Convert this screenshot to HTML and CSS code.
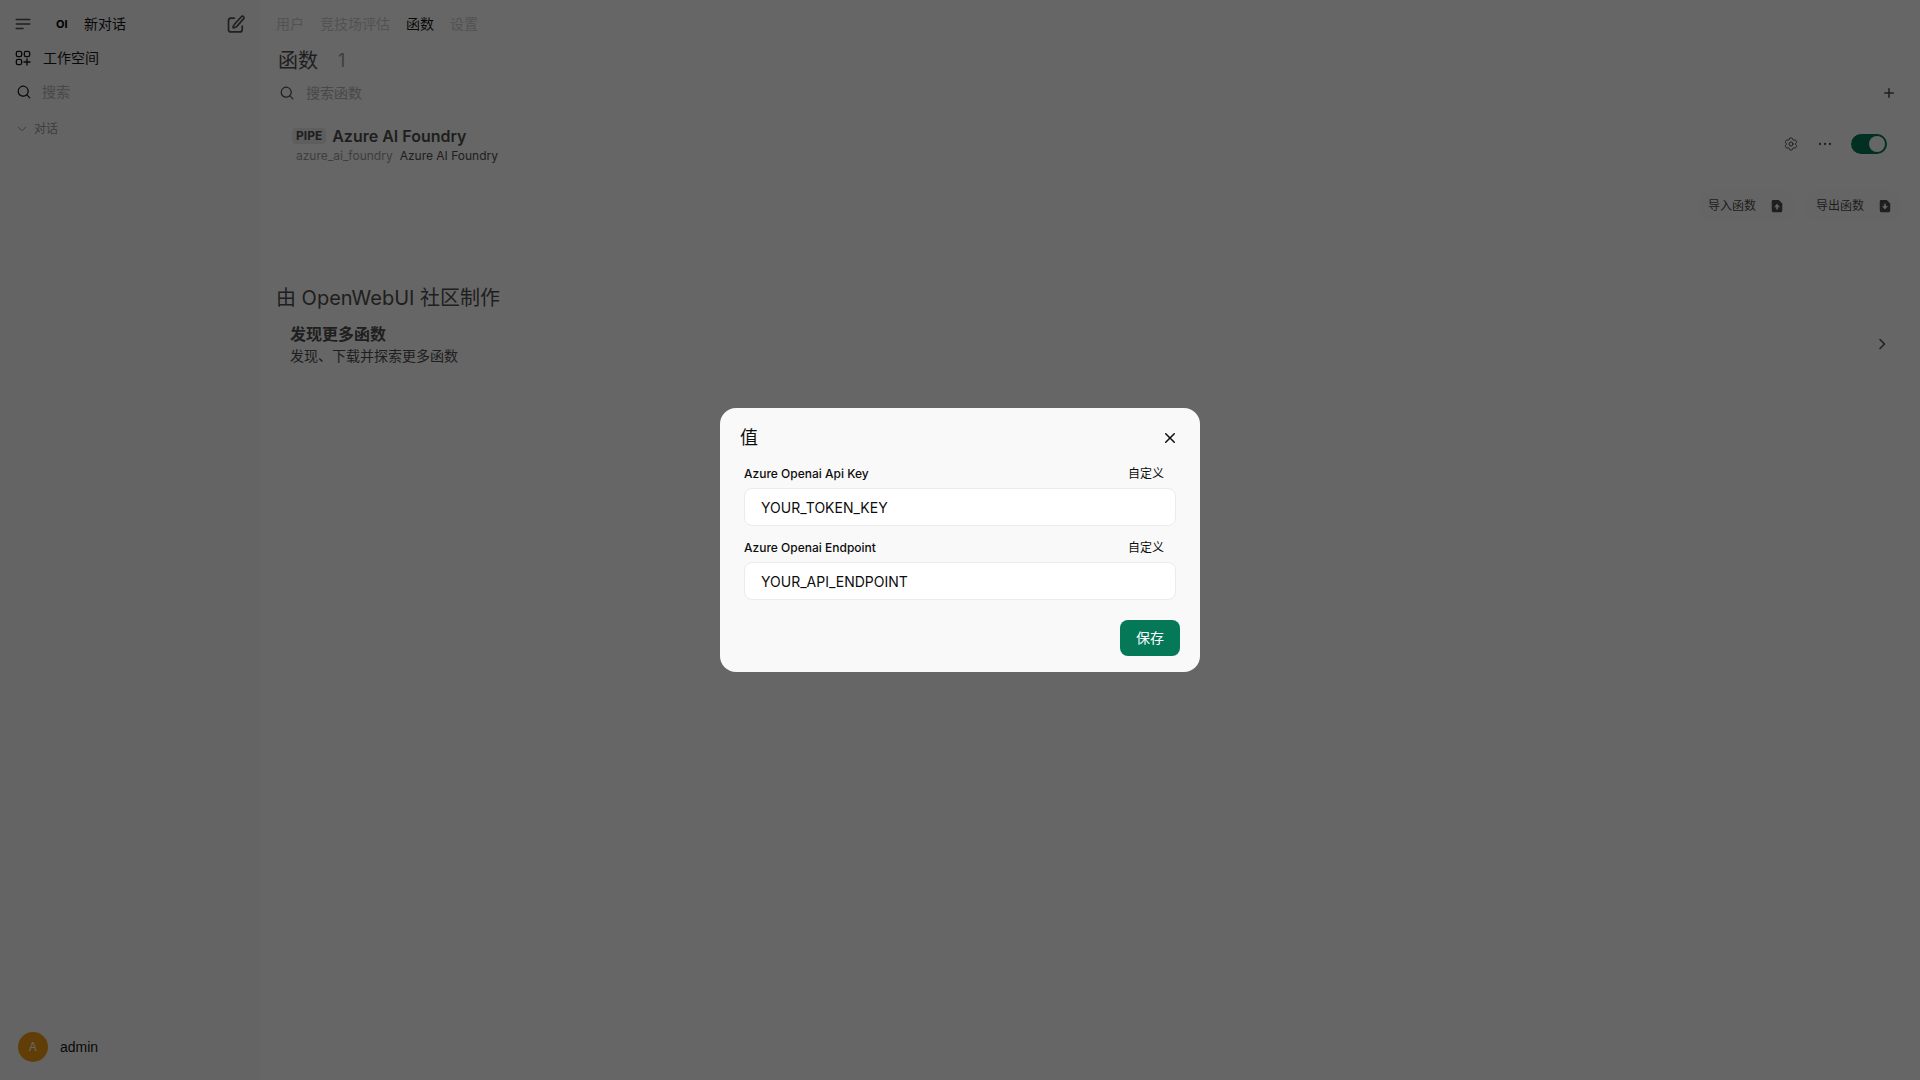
FILE: index.html
```html
<!DOCTYPE html>
<html lang="zh-CN">
<head>
  <meta charset="UTF-8" />
  <meta name="viewport" content="width=device-width, initial-scale=1.0" />
  <title>函数 | Open WebUI</title>
  <link rel="stylesheet" href="styles.css">
</head>
<body>
  <div class="app">
    <aside class="sidebar">
      <div class="side-top">
        <button class="icon-btn menu-btn" aria-label="菜单">
          <svg width="18" height="18" viewBox="0 0 24 24" fill="none" stroke="currentColor" stroke-width="2" stroke-linecap="round"><path d="M3 6h18M3 12h18M3 18h9"/></svg>
        </button>
        <a class="new-chat" href="#">
          <span class="logo">OI</span>
          <span class="new-chat-text">新对话</span>
          <svg width="20" height="20" viewBox="0 0 24 24" fill="none" stroke="currentColor" stroke-width="2" stroke-linecap="round" stroke-linejoin="round"><path d="M10 5H6Q3 5 3 8v10.500q0 3 3 3H16.500q3 0 3-3V14.500"/><path d="M19 2.700a1.900 1.900 0 0 1 2.300 2.800L13 14.800q-2 1.800-4.500 1.800 0-2.500 1.900-4.600z"/></svg>
        </a>
      </div>
      <a class="side-link" href="#">
        <svg width="16" height="16" viewBox="0 0 24 24" fill="none" stroke="currentColor" stroke-width="2" stroke-linecap="round" stroke-linejoin="round"><rect x="2" y="2" width="8" height="8" rx="2.500"/><rect x="14" y="2" width="8" height="8" rx="2.500"/><rect x="2" y="14" width="8" height="8" rx="2.500"/><path d="M18 13.500v9M13.500 18h9"/></svg>
        <span>工作空间</span>
      </a>
      <div class="side-search">
        <svg width="16" height="16" viewBox="0 0 20 20" fill="currentColor"><path fill-rule="evenodd" clip-rule="evenodd" d="M9 3.500a5.500 5.500 0 100 11 5.500 5.500 0 000-11zM2 9a7 7 0 1112.452 4.391l3.328 3.329a.75.75 0 11-1.060 1.060l-3.329-3.328A7 7 0 012 9z"/></svg>
        <input type="text" placeholder="搜索" aria-label="搜索" />
      </div>
      <button class="chats-toggle">
        <svg width="12" height="12" viewBox="0 0 24 24" fill="none" stroke="currentColor" stroke-width="2" stroke-linecap="round" stroke-linejoin="round"><path d="m19.500 8.250-7.500 7.500-7.500-7.500"/></svg>
        <span>对话</span>
      </button>
      <button class="user">
        <span class="avatar">A</span>
        <span class="user-name">admin</span>
      </button>
    </aside>

    <main class="main">
      <nav class="tabs">
        <a href="#">用户</a>
        <a href="#">竞技场评估</a>
        <a href="#" class="active">函数</a>
        <a href="#">设置</a>
      </nav>

      <h1 class="title">函数 <span class="count">1</span></h1>

      <div class="search-row">
        <svg width="16" height="16" viewBox="0 0 20 20" fill="currentColor"><path fill-rule="evenodd" clip-rule="evenodd" d="M9 3.500a5.500 5.500 0 100 11 5.500 5.500 0 000-11zM2 9a7 7 0 1112.452 4.391l3.328 3.329a.75.75 0 11-1.060 1.060l-3.329-3.328A7 7 0 012 9z"/></svg>
        <input type="text" placeholder="搜索函数" aria-label="搜索函数" />
        <button class="icon-btn" aria-label="新建">
          <svg width="16" height="16" viewBox="0 0 16 16" fill="currentColor"><path d="M8.750 3.750a.75.75 0 0 0-1.500 0v3.500h-3.500a.75.75 0 0 0 0 1.500h3.500v3.500a.75.75 0 0 0 1.500 0v-3.500h3.500a.75.75 0 0 0 0-1.500h-3.500v-3.500Z"/></svg>
        </button>
      </div>

      <div class="function">
        <div class="function-info">
          <div class="function-name"><span class="badge">PIPE</span>Azure AI Foundry</div>
          <div class="function-desc"><span class="function-id">azure_ai_foundry</span>Azure AI Foundry</div>
        </div>
        <div class="function-actions">
          <button class="icon-btn" aria-label="值">
            <svg width="16" height="16" viewBox="0 0 24 24" fill="none" stroke="currentColor" stroke-width="1.500" stroke-linecap="round" stroke-linejoin="round"><path d="M9.594 3.940c.09-.542.56-.94 1.110-.94h2.593c.55 0 1.020.398 1.110.94l.213 1.281c.063.374.313.686.645.870.074.040.147.083.22.127.325.196.72.257 1.075.124l1.217-.456a1.125 1.125 0 0 1 1.370.490l1.296 2.247a1.125 1.125 0 0 1-.26 1.431l-1.003.827c-.293.241-.438.613-.43.992a7.723 7.723 0 0 1 0 .255c-.008.378.137.750.43.991l1.004.827c.424.350.534.955.26 1.430l-1.298 2.247a1.125 1.125 0 0 1-1.369.491l-1.217-.456c-.355-.133-.750-.072-1.076.124a6.470 6.470 0 0 1-.22.128c-.331.183-.581.495-.644.869l-.213 1.281c-.09.543-.56.940-1.110.940h-2.594c-.55 0-1.019-.398-1.110-.940l-.213-1.281c-.062-.374-.312-.686-.644-.870a6.520 6.520 0 0 1-.22-.127c-.325-.196-.720-.257-1.076-.124l-1.217.456a1.125 1.125 0 0 1-1.369-.490l-1.297-2.247a1.125 1.125 0 0 1 .26-1.431l1.004-.827c.292-.240.437-.613.430-.991a6.932 6.932 0 0 1 0-.255c.007-.380-.138-.751-.430-.992l-1.004-.827a1.125 1.125 0 0 1-.26-1.430l1.297-2.247a1.125 1.125 0 0 1 1.370-.491l1.216.456c.356.133.751.072 1.076-.124.072-.044.146-.086.220-.128.332-.183.582-.495.644-.869l.214-1.280Z"/><path d="M15 12a3 3 0 1 1-6 0 3 3 0 0 1 6 0Z"/></svg>
          </button>
          <button class="icon-btn" aria-label="更多">
            <svg width="16" height="16" viewBox="0 0 24 24" fill="currentColor"><circle cx="4.500" cy="12" r="1.700"/><circle cx="12" cy="12" r="1.700"/><circle cx="19.500" cy="12" r="1.700"/></svg>
          </button>
          <input class="switch" type="checkbox" aria-label="启用" checked />
        </div>
      </div>

      <div class="io-buttons">
        <button>导入函数
          <svg width="14" height="14" viewBox="0 0 16 16" fill="currentColor"><path fill-rule="evenodd" d="M3.500 1A1.500 1.500 0 0 0 2 2.500v11A1.500 1.500 0 0 0 3.500 15h9a1.500 1.500 0 0 0 1.500-1.500V5L10 1ZM7.100 12V9.500H4.700L8 5.500l3.300 4H8.900V12Z"/></svg>
        </button>
        <button>导出函数
          <svg width="14" height="14" viewBox="0 0 16 16" fill="currentColor"><path fill-rule="evenodd" d="M3.500 1A1.500 1.500 0 0 0 2 2.500v11A1.500 1.500 0 0 0 3.500 15h9a1.500 1.500 0 0 0 1.500-1.500V5L10 1ZM7.100 5.500V8H4.700L8 12l3.300-4H8.900V5.500Z"/></svg>
        </button>
      </div>

      <h2 class="community-title">由 OpenWebUI 社区制作</h2>
      <a class="community" href="#">
        <div>
          <div class="community-name">发现更多函数</div>
          <div class="community-desc">发现、下载并探索更多函数</div>
        </div>
        <svg width="16" height="16" viewBox="0 0 16 16" fill="none" stroke="currentColor" stroke-width="1.500" stroke-linecap="round" stroke-linejoin="round"><path d="m6 3.500 4.500 4.500L6 12.500"/></svg>
      </a>
    </main>
  </div>

  <div class="overlay">
    <form class="modal" role="dialog" aria-labelledby="modal-title">
      <div class="modal-head">
        <h2 id="modal-title">值</h2>
        <button type="button" class="icon-btn" aria-label="关闭">
          <svg width="20" height="20" viewBox="0 0 20 20" fill="currentColor"><path d="M6.280 5.220a.75.75 0 00-1.060 1.060L8.940 10l-3.720 3.720a.75.75 0 101.060 1.060L10 11.060l3.720 3.720a.75.75 0 101.060-1.060L11.060 10l3.720-3.720a.75.75 0 00-1.060-1.060L10 8.940 6.280 5.220z"/></svg>
        </button>
      </div>
      <div class="field">
        <div class="field-head">
          <label for="api-key">Azure Openai Api Key</label>
          <button type="button">自定义</button>
        </div>
        <input type="text" id="api-key" value="YOUR_TOKEN_KEY" />
      </div>
      <div class="field">
        <div class="field-head">
          <label for="endpoint">Azure Openai Endpoint</label>
          <button type="button">自定义</button>
        </div>
        <input type="text" id="endpoint" value="YOUR_API_ENDPOINT" />
      </div>
      <div class="modal-foot">
        <button type="submit" class="save">保存</button>
      </div>
    </form>
  </div>
</body>
</html>
```
FILE: styles.css
```css
* {
  box-sizing: border-box;
}
body {
  margin: 0;
  font-family: Inter, "Noto Sans CJK SC", sans-serif;
  font-size: 14px;
  line-height: 20px;
  color: #4e4e4e;
  background: #fff;
}
a {
  color: inherit;
  text-decoration: none;
}
button,
input {
  font: inherit;
  color: inherit;
  border: none;
  background: none;
  padding: 0;
  margin: 0;
}
button {
  cursor: pointer;
}
input {
  outline: none;
}
svg {
  display: block;
  flex-shrink: 0;
}
h1,
h2 {
  margin: 0;
  font-weight: 400;
}
.icon-btn {
  display: flex;
  align-items: center;
  justify-content: center;
}

/* sidebar */
.app {
  display: flex;
  min-height: 100vh;
}
.sidebar {
  width: 260px;
  flex-shrink: 0;
  display: flex;
  flex-direction: column;
  padding: 7px 14px 15px;
  background: #f9f9f9;
  color: #171717;
}
.side-top {
  display: flex;
  align-items: center;
  height: 34px;
  color: #4e4e4e;
}
.new-chat {
  flex: 1;
  display: flex;
  align-items: center;
  padding: 0 0 0 24px;
}
.logo {
  width: 28px;
  font-size: 11px;
  font-weight: 700;
  color: #000;
}
.new-chat-text {
  flex: 1;
  color: #171717;
}
.side-link {
  display: flex;
  align-items: center;
  gap: 12px;
  height: 34px;
  padding-left: 1px;
}
.side-search {
  display: flex;
  align-items: center;
  gap: 10px;
  height: 34px;
  padding-left: 2px;
}
.side-search input {
  flex: 1;
  min-width: 0;
}
.side-search input::placeholder,
.search-row input::placeholder {
  color: #b4b4b4;
  opacity: 1;
}
.chats-toggle {
  display: flex;
  align-items: center;
  gap: 6px;
  margin-top: 10px;
  padding-left: 2px;
  font-size: 12px;
  color: #9b9b9b;
}
.user {
  display: flex;
  align-items: center;
  gap: 12px;
  margin-top: auto;
  padding: 3px 4px;
}
.user-name {
  font-family: "Liberation Sans", Arial, sans-serif;
}
.avatar {
  width: 30px;
  height: 30px;
  border-radius: 50%;
  background: #f39c12;
  color: #fff;
  font-size: 12px;
  line-height: 30px;
}

/* main */
.main {
  flex: 1;
  min-width: 0;
  padding: 14px 16px;
}
.tabs {
  display: flex;
  gap: 16px;
  color: #cdcdcd;
}
.tabs .active {
  color: #171717;
}
.title {
  display: flex;
  align-items: center;
  gap: 20px;
  margin-top: 13px;
  padding-left: 2px;
  font-size: 20px;
  line-height: 28px;
}
.count {
  font-size: 18px;
  color: #9b9b9b;
}
.search-row {
  display: flex;
  align-items: center;
  gap: 11px;
  height: 36px;
  padding: 0 7px 0 3px;
}
.search-row input {
  flex: 1;
}
.function {
  display: flex;
  justify-content: space-between;
  align-items: center;
  margin-top: 11px;
  padding: 4px 17px 4px 16px;
}
.function-name {
  display: flex;
  align-items: center;
  gap: 6px;
  font-size: 16px;
  font-weight: 600;
}
.badge {
  padding: 0 4px;
  border-radius: 4px;
  background: #ececec;
  font-size: 12px;
  font-weight: 700;
  line-height: 16px;
}
.function-desc {
  display: flex;
  gap: 7px;
  padding-left: 4px;
  font-size: 12px;
}
.function-id {
  color: #9b9b9b;
}
.function-actions {
  display: flex;
  align-items: center;
  gap: 18px;
  padding-bottom: 4px;
}
.switch {
  appearance: none;
  display: flex;
  width: 36px;
  height: 20px;
  padding: 2px;
  border-radius: 10px;
  background: #ddd;
}
.switch::before {
  content: "";
  width: 16px;
  height: 16px;
  border-radius: 50%;
  background: #fff;
}
.switch:checked {
  justify-content: flex-end;
  background: #047857;
}
.io-buttons {
  display: flex;
  justify-content: flex-end;
  gap: 12px;
  margin: 20px 2px 0 0;
}
.io-buttons button {
  display: flex;
  align-items: center;
  gap: 14px;
  padding: 6px 10px;
  border-radius: 12px;
  background: #fdfdfd;
  font-size: 12px;
}
.community-title {
  margin-top: 62px;
  font-size: 20px;
  line-height: 28px;
}
.community {
  display: flex;
  justify-content: space-between;
  align-items: center;
  padding: 10px 14px;
}
.community-name {
  font-size: 16px;
  font-weight: 600;
  line-height: 24px;
}

/* modal */
.overlay {
  position: fixed;
  inset: 0;
  display: flex;
  align-items: center;
  justify-content: center;
  background: rgba(0, 0, 0, 0.6);
}
.modal {
  width: 480px;
  max-width: 100%;
  padding: 16px 20px;
  border-radius: 16px;
  background: #f9f9f9;
  color: #0d0d0d;
}
.modal-head {
  display: flex;
  justify-content: space-between;
  align-items: center;
  margin-bottom: 12px;
}
.modal-head h2 {
  font-size: 18px;
  line-height: 28px;
}
.field {
  padding: 0 4px;
  margin-bottom: 12px;
}
.field-head {
  display: flex;
  justify-content: space-between;
  margin-bottom: 4px;
  padding-right: 12px;
  font-size: 12px;
}
.field-head label {
  font-weight: 500;
}
.field input {
  width: 100%;
  height: 38px;
  padding: 0 16px;
  border: 1px solid #ececec;
  border-radius: 8px;
  background: #fff;
}
.modal-foot {
  display: flex;
  justify-content: flex-end;
  margin-top: 20px;
}
.save {
  padding: 8px 16px;
  border-radius: 8px;
  background: #047857;
  color: #fff;
}
```
